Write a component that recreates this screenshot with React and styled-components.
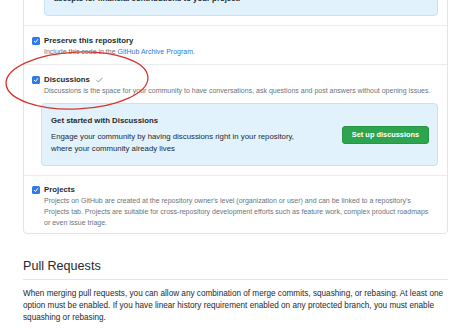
import React from 'react';
import styled, { createGlobalStyle } from 'styled-components';

const GlobalStyle = createGlobalStyle`
  html, body {
    margin: 0;
    padding: 0;
    background: #ffffff;
    overflow: hidden;
  }
  body {
    font-family: "Liberation Sans", Arial, sans-serif;
    color: #24292f;
  }
`;

const StyledPage = styled.div`
  position: relative;
  width: 474px;
  height: 329px;
  overflow: hidden;
`;

const StyledContent = styled.div`
  padding-left: 23px;
  width: 425px;
`;

const StyledCard = styled.section`
  margin-top: -41px;
  border: 1px solid #e1e4e8;
  border-radius: 4px;
  background: #fff;
`;

const StyledRow = styled.div`
  padding: ${({ $pad }) => $pad || '9px 9px 7px 8px'};
  & + & {
    border-top: 1px solid #eaecef;
  }
`;

const StyledOption = styled.div`
  display: grid;
  grid-template-columns: 8px 1fr;
  column-gap: 4px;
`;

const StyledCheck = styled.span`
  width: 8px;
  height: 8px;
  margin-top: 1.5px;
  border-radius: 1.5px;
  background: #2f7ae5;
  display: flex;
  align-items: center;
  justify-content: center;
`;

const StyledTitle = styled.div`
  font-size: 7.8px;
  line-height: 11px;
  font-weight: 700;
  color: #24292f;
  display: flex;
  align-items: center;
  gap: 6px;
`;

const StyledDesc = styled.div`
  grid-column: 2;
  font-size: 7px;
  line-height: 11px;
  color: #6a737d;
  white-space: nowrap;
`;

const StyledLink = styled.a`
  color: #2f7ad6;
  text-decoration: none;
`;

const StyledFlash = styled.div`
  margin: ${({ $margin }) => $margin || '0'};
  border: 1px solid #c5e2f8;
  border-radius: 4px;
  background: #e1f2fd;
  display: flex;
  align-items: center;
  justify-content: space-between;
`;

const StyledFlashText = styled.div`
  padding: ${({ $pad }) => $pad || '10px 9px'};
`;

const StyledSponsorLine = styled.div`
  font-size: 7.8px;
  line-height: 12px;
  font-weight: 700;
  color: #24292f;
  white-space: nowrap;
`;

const StyledFlashHeading = styled.div`
  font-size: 7.8px;
  line-height: 11px;
  font-weight: 700;
  margin-bottom: 5px;
`;

const StyledFlashBody = styled.div`
  font-size: 7.8px;
  line-height: 12px;
  color: #24292f;
  white-space: nowrap;
`;

const StyledButton = styled.button`
  margin-right: 8px;
  width: 87px;
  height: 18px;
  border: 1px solid #2a9446;
  border-radius: 3px;
  background: #2da44e;
  color: #fff;
  font-family: inherit;
  font-size: 7.4px;
  font-weight: 700;
  padding: 0;
  cursor: pointer;
`;

const StyledHeading = styled.h2`
  margin: 24px 0 0;
  padding-bottom: 5px;
  border-bottom: 1px solid #e1e4e8;
  font-size: 12.6px;
  line-height: 16px;
  font-weight: 400;
  color: #24292f;
`;

const StyledParagraph = styled.p`
  margin: 8px 0 0;
  font-size: 8.2px;
  line-height: 12px;
  color: #24292f;
  white-space: nowrap;
`;

const StyledOverlay = styled.svg`
  position: absolute;
  left: 0;
  top: 0;
  pointer-events: none;
`;

const Checkbox = () => (
  <StyledCheck>
    <svg width="6" height="6" viewBox="0 0 12 12">
      <polyline
        points="2.5,6.5 5,9 9.5,3"
        fill="none"
        stroke="#fff"
        strokeWidth="2"
        strokeLinecap="round"
        strokeLinejoin="round"
      />
    </svg>
  </StyledCheck>
);

const SavedMark = () => (
  <svg width="7" height="6" viewBox="0 0 14 12">
    <polyline
      points="1.5,6.5 5,10 12.5,2"
      fill="none"
      stroke="#5f9a6c"
      strokeWidth="1.6"
      strokeLinecap="round"
      strokeLinejoin="round"
    />
  </svg>
);

const App = () => (
  <StyledPage>
    <GlobalStyle />
    <StyledContent>
      <StyledCard>
        <StyledRow $pad="10px 9px 9px 20px">
          <StyledFlash>
            <StyledFlashText>
              <StyledSponsorLine>
                Add links to GitHub Sponsors or third-party methods your repository
              </StyledSponsorLine>
              <StyledSponsorLine>
                accepts for financial contributions to your project.
              </StyledSponsorLine>
            </StyledFlashText>
          </StyledFlash>
        </StyledRow>

        <StyledRow $pad="9px 9px 7px 8px">
          <StyledOption>
            <Checkbox />
            <StyledTitle>Preserve this repository</StyledTitle>
            <StyledDesc>
              Include this code in the <StyledLink href="#">GitHub Archive Program</StyledLink>.
            </StyledDesc>
          </StyledOption>
        </StyledRow>

        <StyledRow $pad="9px 9px 9px 8px">
          <StyledOption>
            <Checkbox />
            <StyledTitle>
              Discussions <SavedMark />
            </StyledTitle>
            <StyledDesc>
              Discussions is the space for your community to have conversations, ask questions and post answers without opening issues.
            </StyledDesc>
          </StyledOption>
          <StyledFlash $margin="7px 0 0 9px">
            <StyledFlashText $pad="11px 9px 10px 9px">
              <StyledFlashHeading>Get started with Discussions</StyledFlashHeading>
              <StyledFlashBody>
                Engage your community by having discussions right in your repository,
                <br />
                where your community already lives
              </StyledFlashBody>
            </StyledFlashText>
            <StyledButton type="button">Set up discussions</StyledButton>
          </StyledFlash>
        </StyledRow>

        <StyledRow $pad="8px 9px 5px 8px">
          <StyledOption>
            <Checkbox />
            <StyledTitle>Projects</StyledTitle>
            <StyledDesc>
              Projects on GitHub are created at the repository owner's level (organization or user) and can be linked to a repository's
              <br />
              Projects tab. Projects are suitable for cross-repository development efforts such as feature work, complex product roadmaps
              <br />
              or even issue triage.
            </StyledDesc>
          </StyledOption>
        </StyledRow>
      </StyledCard>

      <StyledHeading>Pull Requests</StyledHeading>
      <StyledParagraph>
        When merging pull requests, you can allow any combination of merge commits, squashing, or rebasing. At least one
        <br />
        option must be enabled. If you have linear history requirement enabled on any protected branch, you must enable
        <br />
        squashing or rebasing.
      </StyledParagraph>
    </StyledContent>

    <StyledOverlay width="474" height="329" viewBox="0 0 474 329">
      <ellipse
        cx="77"
        cy="80.5"
        rx="71"
        ry="28.5"
        transform="rotate(-2.5 77 80.5)"
        fill="none"
        stroke="#d8342c"
        strokeWidth="1.3"
      />
    </StyledOverlay>
  </StyledPage>
);

export default App;
